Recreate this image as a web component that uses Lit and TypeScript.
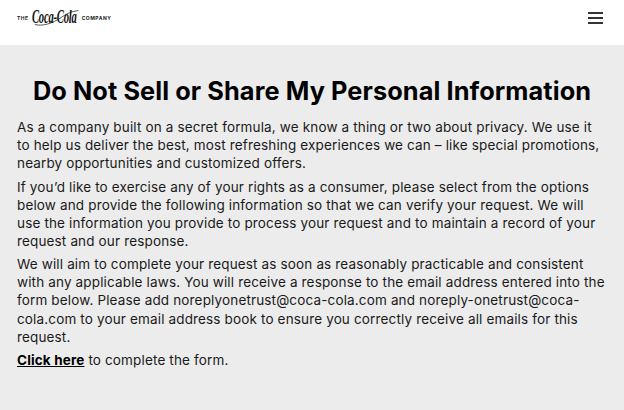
import { LitElement, html, css } from "lit";
import { customElement } from "lit/decorators.js";

@customElement("app-root")
export class AppRoot extends LitElement {
  static styles = css`
    :host { display: block; width: 624px; height: 410px; overflow: hidden; background: #ececec; font-family: Inter, sans-serif; color: #1a1a1a; }
    header { height: 45px; background: #fff; display: flex; align-items: center; justify-content: space-between; padding: 0 21px 9px 17px; box-sizing: border-box; }
    .logo { display: flex; align-items: center; gap: 3px; font-size: 5px; font-weight: 700; letter-spacing: .5px; color: #222; }
    .logo svg { display: block; width: 47px; height: 24px; overflow: visible; }
    .logo text { font-family: "Liberation Serif", serif; font-style: italic; font-weight: 700; font-size: 19px; letter-spacing: -.4px; fill: #111; }
    .menu { width: 15px; height: 12px; display: flex; flex-direction: column; justify-content: space-between; }
    .menu i { display: block; height: 2px; background: #333; }
    main { padding: 31px 17px 0; }
    h1 { margin: 0 0 12px; font-size: 25.3px; line-height: 30px; font-weight: 700; text-align: center; color: #000; letter-spacing: .1px; }
    p { margin: 0 0 5.3px; font-size: 13.5px; line-height: 18.1px; letter-spacing: .15px; }
    a { color: #000; font-weight: 700; }
  `;
  render() {
    return html`
      <header>
        <div class="logo">
          <span>THE</span>
          <svg viewBox="0 0 84 24" preserveAspectRatio="none" aria-label="Coca-Cola">
            <text x="0" y="17">Coca-Cola</text>
            <path d="M5 18.5C20 20.5 36 17.5 52 11.5S74 5.5 83 4.5" fill="none" stroke="#111" stroke-width=".9"></path>
          </svg>
          <span>COMPANY</span>
        </div>
        <div class="menu"><i></i><i></i><i></i></div>
      </header>
      <main>
        <h1>Do Not Sell or Share My Personal Information</h1>
        <p>As a company built on a secret formula, we know a thing or two about privacy. We use it to help us deliver the best, most refreshing experiences we can – like special promotions, nearby opportunities and customized offers.</p>
        <p>If you’d like to exercise any of your rights as a consumer, please select from the options below and provide the following information so that we can verify your request. We will use the information you provide to process your request and to maintain a record of your request and our response.</p>
        <p>We will aim to complete your request as soon as reasonably practicable and consistent with any applicable laws. You will receive a response to the email address entered into the form below. Please add noreplyonetrust@coca-cola.com and noreply-onetrust@coca-cola.com to your email address book to ensure you correctly receive all emails for this request.</p>
        <p><a href="#">Click here</a> to complete the form.</p>
      </main>
    `;
  }
}
